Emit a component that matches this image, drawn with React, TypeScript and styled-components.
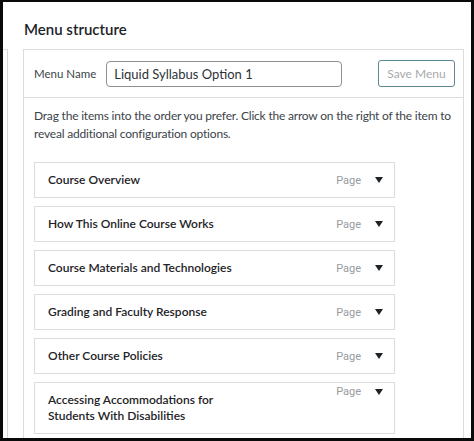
import styled, { createGlobalStyle } from 'styled-components';

const GlobalStyle = createGlobalStyle`
  html, body {
    margin: 0;
    padding: 0;
    background: #000;
  }
  * {
    box-sizing: border-box;
  }
`;

const FONT = `Lato, "Noto Sans", sans-serif`;

const Frame = styled.div`
  width: 474px;
  height: 441px;
  border-style: solid;
  border-color: #0a0a0a;
  border-width: 2px 3px 3px 3px;
  background: #fff;
  display: flex;
  overflow: hidden;
  font-family: ${FONT};
`;

const LeftStub = styled.div`
  width: 5px;
  margin-top: 47px;
  border-top: 1px solid #e2e3e4;
  border-right: 1px solid #d6d7d9;
  flex-shrink: 0;
`;

const Main = styled.div`
  flex: 1;
  padding: 0 7px 0 15px;
  display: flex;
  flex-direction: column;
`;

const Heading = styled.h2`
  margin: 0;
  flex-shrink: 0;
  height: 47px;
  padding: 17px 0 0 1px;
  font-size: 15px;
  line-height: 20px;
  font-weight: 600;
  color: #1d2327;
`;

const Panel = styled.div`
  border: 1px solid #dcdcde;
  border-bottom: none;
  flex: 1;
  display: flex;
  flex-direction: column;
`;

const Header = styled.div`
  height: 48px;
  flex-shrink: 0;
  display: flex;
  align-items: center;
  padding: 0 8px 0 10px;
  border-bottom: 1px solid #dcdcde;
`;

const Label = styled.label`
  font-size: 11.5px;
  color: #3c434a;
  margin-right: 10px;
`;

const NameInput = styled.div`
  width: 236px;
  height: 26px;
  border: 1px solid #8c8f94;
  border-radius: 4px;
  padding: 0 7px;
  display: flex;
  align-items: center;
  font-size: 13px;
  color: #2c3338;
`;

const SaveButton = styled.button`
  margin-left: auto;
  width: 77px;
  height: 27px;
  border: 1.5px solid #5e8795;
  border-radius: 3px;
  background: #fff;
  color: #a7aaad;
  font-family: ${FONT};
  font-size: 12px;
  padding: 0;
`;

const Body = styled.div`
  padding: 9px 8px 0 10px;
`;

const Hint = styled.p`
  margin: 0 0 19px;
  font-size: 12px;
  line-height: 18px;
  letter-spacing: -0.2px;
  color: #3c434a;
`;

const ItemList = styled.ul`
  list-style: none;
  margin: 0;
  padding: 0;
  width: 361px;
  display: flex;
  flex-direction: column;
  gap: 8px;
`;

const Item = styled.li<{ $multi?: boolean }>`
  border: 1px solid #dcdcde;
  background: #fff;
  display: flex;
  align-items: ${(p) => (p.$multi ? 'flex-start' : 'center')};
  padding-left: 13px;
  padding-right: 11px;
`;

const ItemTitle = styled.span`
  padding: 9px 0;
  font-size: 12px;
  line-height: 16px;
  font-weight: 600;
  color: #1d2327;
  max-width: 195px;
`;

const Controls = styled.span<{ $multi?: boolean }>`
  margin-left: auto;
  display: flex;
  align-items: center;
  gap: 14px;
  margin-top: ${(p) => (p.$multi ? '2px' : '0')};
`;

const ItemType = styled.span`
  font-family: Roboto, "Noto Sans", sans-serif;
  font-size: 11px;
  color: #979ba0;
`;

const Arrow = () => (
  <svg width="8" height="6" viewBox="0 0 8 6">
    <polygon points="0,0 8,0 4,6" fill="#1d2327" />
  </svg>
);

const items = [
  'Course Overview',
  'How This Online Course Works',
  'Course Materials and Technologies',
  'Grading and Faculty Response',
  'Other Course Policies',
  'Accessing Accommodations for Students With Disabilities',
];

export default function App() {
  return (
    <>
      <GlobalStyle />
      <Frame>
        <LeftStub />
        <Main>
          <Heading>Menu structure</Heading>
          <Panel>
            <Header>
              <Label>Menu Name</Label>
              <NameInput>Liquid Syllabus Option 1</NameInput>
              <SaveButton>Save Menu</SaveButton>
            </Header>
            <Body>
              <Hint>
                Drag the items into the order you prefer. Click the arrow on the right of the item to
                reveal additional configuration options.
              </Hint>
              <ItemList>
                {items.map((title) => {
                  const multi = title.length > 35;
                  return (
                    <Item key={title} $multi={multi}>
                      <ItemTitle>{title}</ItemTitle>
                      <Controls $multi={multi}>
                        <ItemType>Page</ItemType>
                        <Arrow />
                      </Controls>
                    </Item>
                  );
                })}
              </ItemList>
            </Body>
          </Panel>
        </Main>
      </Frame>
    </>
  );
}
